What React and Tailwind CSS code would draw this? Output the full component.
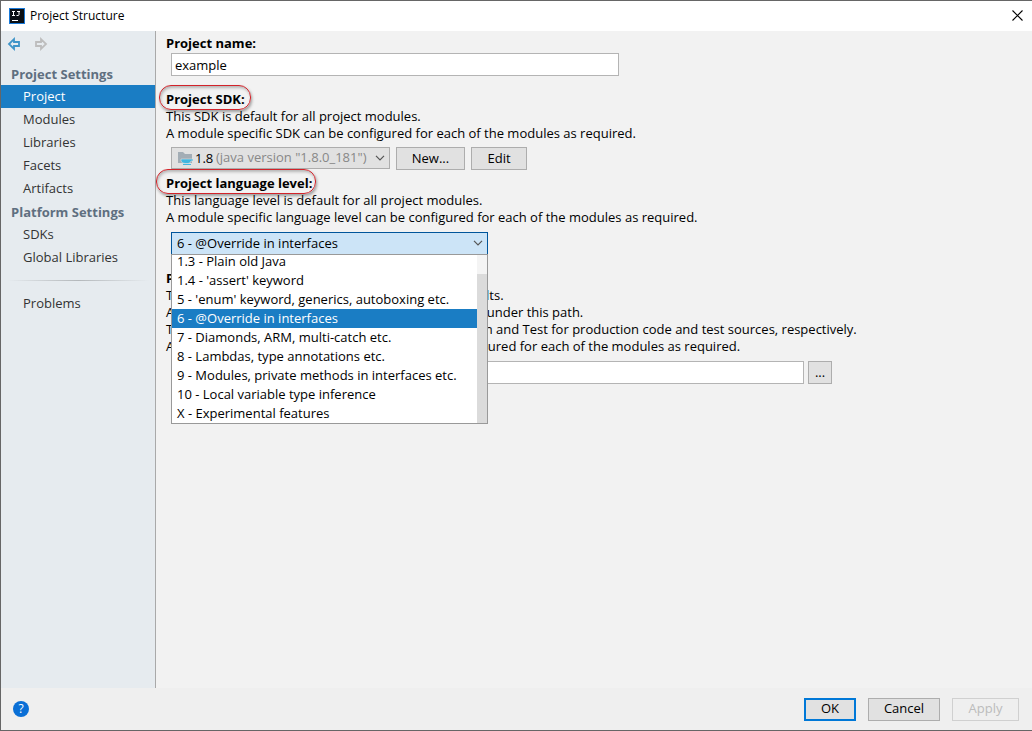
import { useState } from 'react';
import clsx from 'clsx';

const projectSettings = ['Project', 'Modules', 'Libraries', 'Facets', 'Artifacts'];
const platformSettings = ['SDKs', 'Global Libraries'];

const languageLevels = [
  '1.3 - Plain old Java',
  "1.4 - 'assert' keyword",
  "5 - 'enum' keyword, generics, autoboxing etc.",
  '6 - @Override in interfaces',
  '7 - Diamonds, ARM, multi-catch etc.',
  '8 - Lambdas, type annotations etc.',
  '9 - Modules, private methods in interfaces etc.',
  '10 - Local variable type inference',
  'X - Experimental features',
];

const IdeaLogo = () => (
  <svg width="16" height="16" viewBox="0 0 16 16" aria-hidden="true">
    <rect width="16" height="16" fill="#1a7ad9" />
    <rect x="1" y="1" width="14" height="14" fill="#0b0f14" />
    <path d="M3 3.5h3M4.500 3.500v4M3 7.500h3M8 3.500h3M10 3.500v3.200q0 .8-.9.8H7.500" stroke="#fff" fill="none" />
    <path d="M3 12.500h6" stroke="#fff" />
  </svg>
);

const NavArrow = ({ color, flipped }) => (
  <svg width="14" height="14" viewBox="0 0 14 14" className={clsx(flipped && '-scale-x-100')} aria-hidden="true">
    <path d="M7 2.200 2 7l5 4.800V9h5V5H7z" fill="none" stroke={color} strokeWidth="1.8" />
  </svg>
);

const FolderIcon = () => (
  <svg width="16" height="16" viewBox="0 0 16 16" aria-hidden="true">
    <path d="M1 2h5l2 2h7v9H1z" fill="#a3adb5" />
    <path d="M4 9h12v2h-2q-.5 2.500-3 2.500H8q-3 0-4-2.500z" fill="#40b6e0" stroke="#e1e1e1" strokeWidth=".6" />
    <path d="M6 14.500h8" stroke="#40b6e0" />
  </svg>
);

const Chevron = () => (
  <svg width="10" height="6" viewBox="0 0 10 6" className="pointer-events-none absolute right-[5px] top-2" aria-hidden="true">
    <path d="M1 .8l4 4 4-4" fill="none" stroke="#555" strokeWidth="1.2" />
  </svg>
);

const Ring = ({ className }) => (
  <span
    className={clsx(
      'pointer-events-none absolute -top-[6px] h-[25px] rounded-xl border border-[#d2232a] shadow-[1px_2px_3px_rgba(0,0,0,0.35),inset_1px_2px_3px_rgba(0,0,0,0.25)]',
      className
    )}
  />
);

const Button = ({ className, ...props }) => (
  <button type="button" className={clsx('h-[23px] pb-[2px] leading-4', className)} {...props} />
);

const NavItem = ({ name, active, onSelect }) => (
  <li>
    <button
      type="button"
      onClick={() => onSelect(name)}
      className={clsx(
        'block h-[23px] w-full pl-[22px] text-left',
        active ? 'bg-[#1a7dc4] text-white' : 'text-[#333]'
      )}
    >
      {name}
    </button>
  </li>
);

const Sidebar = () => {
  const [selected, setSelected] = useState('Project');

  return (
    <nav className="w-[155px] shrink-0 border-r border-[#a9a9a9] bg-[#e6ebef]">
      <div className="flex h-[31px] gap-[13px] pl-[6px] pt-[6px]">
        <button type="button" aria-label="Back" className="h-[14px]">
          <NavArrow color="#3e94c8" />
        </button>
        <button type="button" aria-label="Forward" className="h-[14px]">
          <NavArrow color="#bdbdbd" flipped />
        </button>
      </div>
      <h2 className="h-[23px] pl-[10px] font-bold leading-[24px] text-[#5f6f80]">Project Settings</h2>
      <ul>
        {projectSettings.map((name) => (
          <NavItem key={name} name={name} active={name === selected} onSelect={setSelected} />
        ))}
      </ul>
      <h2 className="h-[23px] pl-[10px] font-bold leading-[24px] text-[#5f6f80]">Platform Settings</h2>
      <ul>
        {platformSettings.map((name) => (
          <NavItem key={name} name={name} active={name === selected} onSelect={setSelected} />
        ))}
      </ul>
      <div className="mx-[6px] my-[11px] h-px bg-linear-to-r from-transparent via-[#b4b8bb] to-transparent" />
      <ul>
        <NavItem name="Problems" active={selected === 'Problems'} onSelect={setSelected} />
      </ul>
    </nav>
  );
};

const LanguageLevelSelect = () => {
  const [level, setLevel] = useState('6 - @Override in interfaces');

  return (
    <div className="relative ml-[5px] mt-[6px] w-[317px]">
      <select
        id="language-level"
        value={level}
        onChange={(e) => setLevel(e.target.value)}
        className="block h-[23px] w-full appearance-none border border-[#00559b] bg-[#cce4f7] pl-[5px]"
      >
        {languageLevels.map((name) => (
          <option key={name}>{name}</option>
        ))}
      </select>
      <Chevron />
      {/* Opened list */}
      <div className="absolute left-0 top-[22px] flex h-[170px] w-full border border-[#999] bg-white">
        <ul role="listbox" aria-label="Language levels" className="flex flex-1 flex-col justify-end overflow-hidden">
          {languageLevels.map((name) => (
            <li
              key={name}
              role="option"
              aria-selected={name === level}
              onClick={() => setLevel(name)}
              className={clsx(
                'h-[19px] shrink-0 whitespace-nowrap pl-[5px] leading-[19px]',
                name === level && 'bg-[#1a7dc4] text-white'
              )}
            >
              {name}
            </li>
          ))}
        </ul>
        <div className="w-[10px] bg-[#f4f4f4] pt-[19px]">
          <div className="h-full bg-[#dbdbdb]" />
        </div>
      </div>
    </div>
  );
};

const ProjectForm = () => {
  const [name, setName] = useState('example');
  const [output, setOutput] = useState('');

  return (
    <main className="min-w-0 flex-1 bg-[#f2f2f2] pl-[10px] pt-1 leading-[17px]">
      <label htmlFor="project-name" className="block font-bold">
        Project name:
      </label>
      <input
        id="project-name"
        value={name}
        onChange={(e) => setName(e.target.value)}
        className="ml-[5px] mt-px block h-[23px] w-[448px] border border-[#b4b4b4] bg-white px-[3px]"
      />

      <label htmlFor="sdk" className="relative mt-[15px] block w-fit font-bold">
        Project SDK:
        <Ring className="-left-[7px] -right-[6px]" />
      </label>
      <p>This SDK is default for all project modules.</p>
      <p>A module specific SDK can be configured for each of the modules as required.</p>
      <div className="ml-[5px] mt-[5px] flex gap-[6px]">
        <div className="relative h-[22px] w-[219px]">
          <select id="sdk" className="block h-full w-full appearance-none border border-[#adadad] bg-[#e1e1e1] pl-[23px]">
            <option>1.8</option>
          </select>
          <span className="pointer-events-none absolute left-[6px] top-[3px]">
            <FolderIcon />
          </span>
          <span className="pointer-events-none absolute left-[45px] top-[2px] text-[#888]">
            (java version "1.8.0_181")
          </span>
          <Chevron />
        </div>
        <Button className="w-[69px] border border-[#adadad] bg-[#e1e1e1]">New...</Button>
        <Button className="w-[56px] border border-[#adadad] bg-[#e1e1e1]">Edit</Button>
      </div>

      <label htmlFor="language-level" className="relative mt-[5px] block w-fit font-bold">
        Project language level:
        <Ring className="-left-[10px] -right-1" />
      </label>
      <p>This language level is default for all project modules.</p>
      <p>A module specific language level can be configured for each of the modules as required.</p>
      <LanguageLevelSelect />

      <label htmlFor="output" className="mt-[15px] block font-bold">
        Project compiler output:
      </label>
      <p>This path is used to store all project compilation results.</p>
      <p>A directory corresponding to each module is created under this path.</p>
      <p>This directory contains two subdirectories: Production and Test for production code and test sources, respectively.</p>
      <p>A module specific compiler output path can be configured for each of the modules as required.</p>
      <div className="ml-[5px] mt-[6px] flex gap-1">
        <input
          id="output"
          value={output}
          onChange={(e) => setOutput(e.target.value)}
          className="h-[23px] w-[633px] border border-[#b4b4b4] bg-white px-[3px]"
        />
        <Button className="w-6 border border-[#adadad] bg-[#e1e1e1]" aria-label="Browse">
          ...
        </Button>
      </div>
    </main>
  );
};

const App = () => (
  <div className="flex min-h-screen flex-col border-b border-l border-t border-[#666] bg-[#f0f0f0] font-['Open_Sans','Noto_Sans',sans-serif] text-[13px] text-black">
    <header className="flex h-[30px] items-center bg-white pb-px pl-2 pr-[9px]">
      <IdeaLogo />
      <h1 className="ml-[5px] flex-1 text-[12px]">Project Structure</h1>
      <button type="button" aria-label="Close">
        <svg width="11" height="11" viewBox="0 0 11 11">
          <path d="M.5.5l10 10M10.500.5l-10 10" stroke="#000" strokeWidth="1.1" />
        </svg>
      </button>
    </header>

    <div className="flex flex-1">
      <Sidebar />
      <ProjectForm />
    </div>

    <footer className="flex h-[42px] items-center gap-3 bg-[#efefef] pl-3 pr-[13px]">
      <button
        type="button"
        aria-label="Help"
        className="mr-auto h-4 w-4 rounded-full bg-[#0a6fd6] text-center text-[12px] leading-4 text-white"
      >
        ?
      </button>
      <Button className="w-[52px] border-2 border-[#0078d7] bg-[#e1e1e1]">OK</Button>
      <Button className="w-[72px] border border-[#adadad] bg-[#e1e1e1]">Cancel</Button>
      <Button className="w-[67px] border border-[#d0d0d0] bg-[#efefef] text-[#bcbcbc]" disabled>
        Apply
      </Button>
    </footer>
  </div>
);

export default App;
